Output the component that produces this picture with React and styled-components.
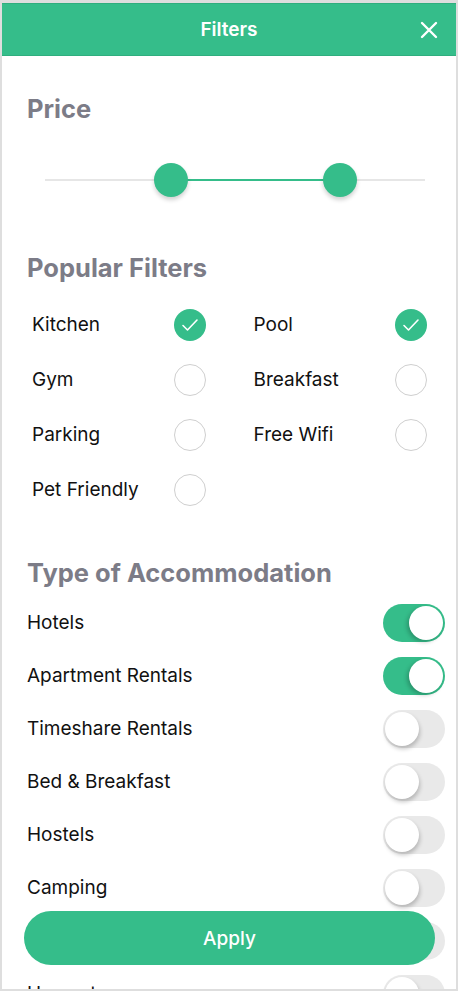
import React, { useState } from 'react';
import styled, { createGlobalStyle } from 'styled-components';

const green = '#35bd8a';

const GlobalStyle = createGlobalStyle`
  html, body {
    margin: 0;
    padding: 0;
    background: #ffffff;
    font-family: Inter, "Noto Sans", "Liberation Sans", sans-serif;
  }
  * { box-sizing: border-box; }
`;

const Frame = styled.div`
  width: 458px;
  height: 991px;
  border: 2px solid #dedede;
  border-top-width: 3px;
  overflow: hidden;
  background: #fff;
`;

const Header = styled.header`
  height: 53px;
  background: ${green};
  border-top: 1px solid #2fae7e;
  border-bottom: 1px solid #2fae7e;
  display: flex;
  align-items: center;
  justify-content: center;
  position: relative;
`;

const HeaderTitle = styled.h1`
  margin: 0;
  color: #fff;
  font-size: 19px;
  font-weight: 600;
`;

const CloseButton = styled.button`
  position: absolute;
  right: 16px;
  top: 50%;
  transform: translateY(-50%);
  background: none;
  border: none;
  padding: 0;
  width: 22px;
  height: 22px;
  display: flex;
  align-items: center;
  justify-content: center;
`;

const Body = styled.div`
  display: flex;
  flex-direction: column;
`;

const SectionTitle = styled.h2`
  margin: ${(p) => p.$mt}px 0 0 25px;
  font-size: 25.5px;
  line-height: 30px;
  font-weight: 700;
  color: #7c7c87;
`;

const SliderWrap = styled.div`
  margin: 39px 31px 0 43px;
  height: 34px;
  position: relative;
  display: flex;
  align-items: center;
`;

const Track = styled.div`
  width: 100%;
  height: 2px;
  background: #e6e6e6;
  position: relative;
`;

const ActiveTrack = styled.div`
  position: absolute;
  top: 0;
  height: 2px;
  background: ${green};
`;

const Thumb = styled.div`
  position: absolute;
  top: 50%;
  width: 34px;
  height: 34px;
  border-radius: 50%;
  background: ${green};
  transform: translate(-50%, -50%);
  box-shadow: 0 3px 4px rgba(0, 0, 0, 0.18);
`;

const FilterGrid = styled.div`
  margin-top: 14px;
  display: grid;
  grid-template-columns: 1fr 1fr;
  column-gap: 48px;
  padding: 0 29px 0 30px;
`;

const FilterItem = styled.label`
  height: 55px;
  display: flex;
  align-items: center;
  justify-content: space-between;
  font-size: 19px;
  color: #111;
`;

const Check = styled.span`
  width: 32px;
  height: 32px;
  border-radius: 50%;
  border: ${(p) => (p.$on ? 'none' : '1.5px solid #cfcfcf')};
  background: ${(p) => (p.$on ? green : '#fff')};
  display: flex;
  align-items: center;
  justify-content: center;
`;

const ToggleList = styled.div`
  margin-top: 8px;
  display: flex;
  flex-direction: column;
  padding: 0 11px 0 25px;
`;

const ToggleRow = styled.div`
  height: 53px;
  flex-shrink: 0;
  display: flex;
  align-items: center;
  justify-content: space-between;
  font-size: 19px;
  color: #111;
`;

const Switch = styled.button`
  width: 62px;
  height: 38px;
  border-radius: 19px;
  border: none;
  padding: 2px;
  background: ${(p) => (p.$on ? green : '#e9e9e9')};
  display: flex;
  justify-content: ${(p) => (p.$on ? 'flex-end' : 'flex-start')};
  align-items: center;
`;

const Knob = styled.span`
  width: 34px;
  height: 34px;
  border-radius: 50%;
  background: #fff;
  box-shadow: ${(p) =>
    p.$on ? '-2px 2px 4px rgba(0,0,0,0.22)' : '1px 3px 4px rgba(0,0,0,0.22)'};
`;

const ApplyButton = styled.button`
  position: fixed;
  left: 24px;
  bottom: 28px;
  width: 411px;
  height: 54px;
  border-radius: 27px;
  border: none;
  background: ${green};
  color: #fff;
  font-family: inherit;
  font-size: 19px;
  font-weight: 500;
`;

const filters = [
  ['Kitchen', true],
  ['Pool', true],
  ['Gym', false],
  ['Breakfast', false],
  ['Parking', false],
  ['Free Wifi', false],
  ['Pet Friendly', false],
];

const types = [
  ['Hotels', true],
  ['Apartment Rentals', true],
  ['Timeshare Rentals', false],
  ['Bed & Breakfast', false],
  ['Hostels', false],
  ['Camping', false],
  ['Resorts', false],
  ['Homestays', false],
];

const App = () => {
  const [checked, setChecked] = useState(filters.map((f) => f[1]));
  const [toggles, setToggles] = useState(types.map((t) => t[1]));
  const low = 33.2;
  const high = 77.6;

  return (
    <>
      <GlobalStyle />
      <Frame>
        <Header>
          <HeaderTitle>Filters</HeaderTitle>
          <CloseButton aria-label="close">
            <svg width="18" height="18" viewBox="0 0 18 18">
              <path d="M2 2L16 16M16 2L2 16" stroke="#fff" strokeWidth="2.4" strokeLinecap="round" />
            </svg>
          </CloseButton>
        </Header>
        <Body>
          <SectionTitle $mt={38}>Price</SectionTitle>
          <SliderWrap>
            <Track>
              <ActiveTrack style={{ left: `${low}%`, width: `${high - low}%` }} />
              <Thumb style={{ left: `${low}%` }} />
              <Thumb style={{ left: `${high}%` }} />
            </Track>
          </SliderWrap>

          <SectionTitle $mt={56}>Popular Filters</SectionTitle>
          <FilterGrid>
            {filters.map(([name], i) => (
              <FilterItem
                key={name}
                onClick={() => setChecked(checked.map((c, j) => (j === i ? !c : c)))}
              >
                {name}
                <Check $on={checked[i]}>
                  {checked[i] && (
                    <svg width="18" height="14" viewBox="0 0 18 14">
                      <path d="M2 7.5L6.5 12L16 2" fill="none" stroke="#fff" strokeWidth="1.6" strokeLinecap="round" strokeLinejoin="round" />
                    </svg>
                  )}
                </Check>
              </FilterItem>
            ))}
          </FilterGrid>

          <SectionTitle $mt={41}>Type of Accommodation</SectionTitle>
          <ToggleList>
            {types.map(([name], i) => (
              <ToggleRow key={name}>
                {name}
                <Switch
                  $on={toggles[i]}
                  onClick={() => setToggles(toggles.map((t, j) => (j === i ? !t : t)))}
                >
                  <Knob $on={toggles[i]} />
                </Switch>
              </ToggleRow>
            ))}
          </ToggleList>
        </Body>
      </Frame>
      <ApplyButton>Apply</ApplyButton>
    </>
  );
};

export default App;
